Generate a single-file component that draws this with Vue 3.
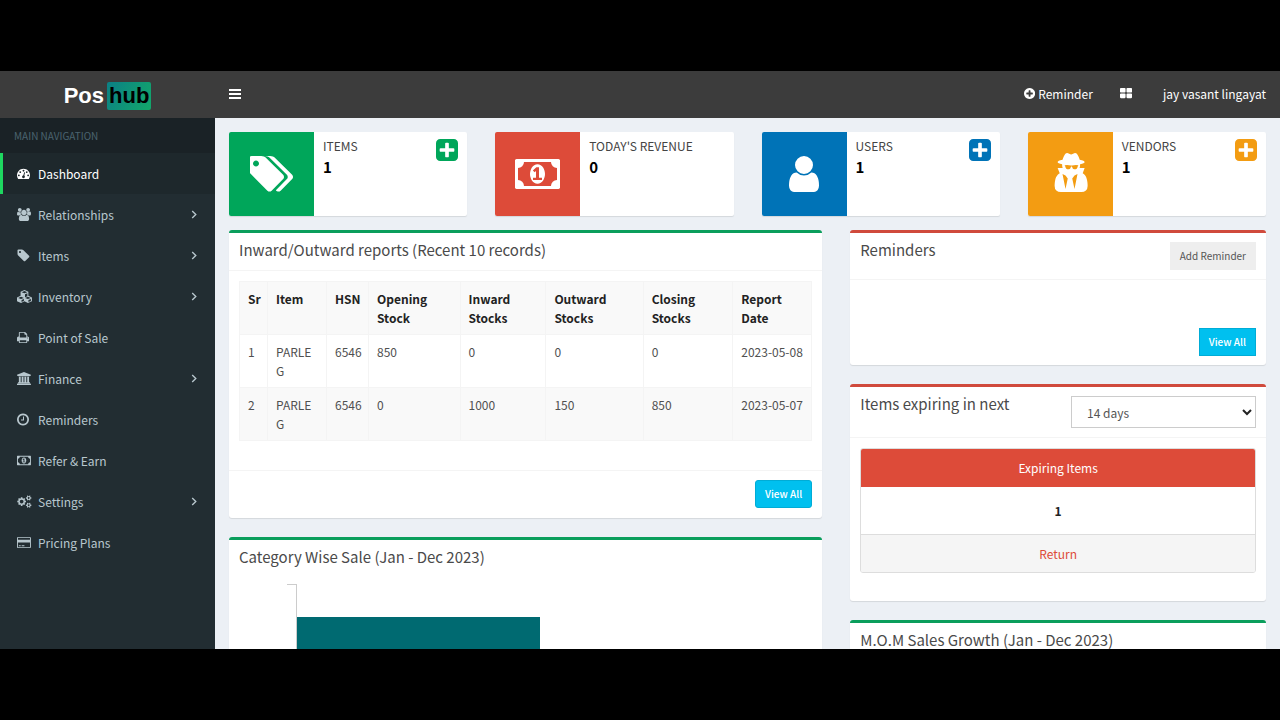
<template>
  <div class="stage">
    <div class="app">
      <header class="topbar">
        <a class="logo" href="#"><span>Pos</span><span class="logo-hub">hub</span></a>
        <div class="topbar-main">
          <button class="icon-btn" type="button" aria-label="Toggle navigation">
            <svg class="bars" viewBox="0 0 12 10"><path d="M0 0h12v2H0zM0 4h12v2H0zM0 8h12v2H0z" /></svg>
          </button>
          <nav class="topbar-links">
            <a class="reminder-link" href="#">
              <svg class="icon" viewBox="128 0 1536 1792"><path :d="icons.plusCircle" /></svg>
              Reminder
            </a>
            <a href="#" aria-label="Modules">
              <svg class="icon" viewBox="64 0 1664 1792"><path :d="icons.thLarge" /></svg>
            </a>
            <a class="user-link" href="#">jay vasant lingayat</a>
          </nav>
        </div>
      </header>

      <div class="wrapper">
        <aside class="sidebar">
          <div class="section-label">MAIN NAVIGATION</div>
          <ul class="menu">
            <li v-for="item in menu" :key="item.label">
              <a href="#" class="menu-link" :class="{ active: item.active }">
                <span class="menu-icon">
                  <svg class="icon" :viewBox="item.box">
                    <path :d="icons[item.icon]" fill-rule="evenodd" />
                  </svg>
                </span>
                <span class="menu-text">{{ item.label }}</span>
                <svg v-if="item.children" class="angle" viewBox="0 0 6 10">
                  <path d="M1 1l4 4-4 4" />
                </svg>
              </a>
            </li>
          </ul>
        </aside>

        <main class="content">
          <section class="stats">
            <div v-for="stat in stats" :key="stat.label" class="info-box" :class="stat.color">
              <div class="info-icon">
                <svg :viewBox="stat.box"><path :d="icons[stat.icon]" /></svg>
              </div>
              <div class="info-body">
                <span class="info-label">{{ stat.label }}</span>
                <strong class="info-value">{{ stat.value }}</strong>
              </div>
              <button v-if="stat.canAdd" class="info-add" type="button" :aria-label="'Add ' + stat.label">
                <svg viewBox="128 128 1536 1536"><path :d="icons.plusSquare" /></svg>
              </button>
            </div>
          </section>

          <section class="columns">
            <div class="col-left">
              <div class="box green">
                <div class="box-header">
                  <h3>Inward/Outward reports (Recent 10 records)</h3>
                </div>
                <div class="box-body">
                  <table class="report">
                    <thead>
                      <tr>
                        <th v-for="col in columns" :key="col.title" :class="col.cls">{{ col.title }}</th>
                      </tr>
                    </thead>
                    <tbody>
                      <tr v-for="row in rows" :key="row[0]">
                        <td v-for="(cell, i) in row" :key="i">{{ cell }}</td>
                      </tr>
                    </tbody>
                  </table>
                </div>
                <div class="box-footer">
                  <button class="btn btn-info rounded" type="button">View All</button>
                </div>
              </div>

              <div class="box green">
                <div class="box-header plain">
                  <h3>Category Wise Sale (Jan - Dec 2023)</h3>
                </div>
                <div class="chart">
                  <div class="chart-tick"></div>
                  <div class="chart-plot">
                    <div class="chart-bar" :style="{ width: barWidth + '%' }"></div>
                  </div>
                </div>
              </div>
            </div>

            <div class="col-right">
              <div class="box red">
                <div class="box-header">
                  <h3>Reminders</h3>
                  <button class="btn btn-default" type="button">Add Reminder</button>
                </div>
                <div class="reminder-body">
                  <button class="btn btn-info" type="button">View All</button>
                </div>
              </div>

              <div class="box red">
                <div class="box-header">
                  <h3><label for="expiry-range">Items expiring in next</label></h3>
                  <div class="select-wrap">
                    <select id="expiry-range" v-model="range">
                      <option>7 days</option>
                      <option>14 days</option>
                      <option>30 days</option>
                    </select>
                    <svg class="caret" viewBox="0 0 10 7"><path d="M1 1l4 4 4-4" /></svg>
                  </div>
                </div>
                <div class="expiry-body">
                  <div class="panel">
                    <div class="panel-head">Expiring Items</div>
                    <div class="panel-body">1</div>
                    <div class="panel-foot"><a href="#">Return</a></div>
                  </div>
                </div>
              </div>

              <div class="box green">
                <div class="box-header plain">
                  <h3>M.O.M Sales Growth (Jan - Dec 2023)</h3>
                </div>
                <div class="chart"></div>
              </div>
            </div>
          </section>
        </main>
      </div>
    </div>
  </div>
</template>

<script setup>
import { ref } from 'vue'

const range = ref('14 days')
const barWidth = 47

const icons = {
  dashboard:
    'M384 1152q0-53-37.5-90.5t-90.5-37.5-90.5 37.5-37.5 90.5 37.5 90.5 90.5 37.5 90.5-37.5 37.5-90.5zm192-448q0-53-37.5-90.5t-90.5-37.5-90.5 37.5-37.5 90.5 37.5 90.5 90.5 37.5 90.5-37.5 37.5-90.5zm428 481l101-382q6-26-7.5-48.5t-38.5-29.5-48 6.5-30 39.5l-101 382q-60 5-107 43.5t-63 98.5q-20 77 20 146t117 89 146-20 89-117q16-60-6-117t-72-91zm660-33q0-53-37.5-90.5t-90.5-37.5-90.5 37.5-37.5 90.5 37.5 90.5 90.5 37.5 90.5-37.5 37.5-90.5zm-640-640q0-53-37.5-90.5t-90.5-37.5-90.5 37.5-37.5 90.5 37.5 90.5 90.5 37.5 90.5-37.5 37.5-90.5zm448 192q0-53-37.5-90.5t-90.5-37.5-90.5 37.5-37.5 90.5 37.5 90.5 90.5 37.5 90.5-37.5 37.5-90.5zm320 448q0 261-141 483-19 29-54 29h-1402q-35 0-54-29-141-221-141-483 0-182 71-348t191-286 286-191 348-71 348 71 286 191 191 286 71 348z',
  users:
    'M529 896q-162 5-265 128h-134q-82 0-138-40.5t-56-118.5q0-353 124-353 6 0 43.5 21t97.5 42.5 119 21.5q67 0 133-23-5 37-5 66 0 159 93 302zm1071 637q0 120-73 189.5t-194 69.5h-874q-121 0-194-69.5t-73-189.5q0-53 3.5-103.5t14-109 26.5-108.5 43-97.5 62-81 85.5-53.5 111.5-20q10 0 43 21.5t73 48 107 48 135 21.5 135-21.5 107-48 73-48 43-21.5q61 0 111.5 20t85.5 53.5 62 81 43 97.5 26.5 108.5 14 109 3.5 103.5zm-1024-1277q0 106-75 181t-181 75-181-75-75-181 75-181 181-75 181 75 75 181zm704 384q0 159-112.5 271.5t-271.5 112.5-271.5-112.5-112.5-271.5 112.5-271.5 271.5-112.5 271.5 112.5 112.5 271.5zm576 225q0 78-56 118.5t-138 40.5h-134q-103-123-265-128 93-143 93-302 0-29-5-66 66 23 133 23 59 0 119-21.5t97.5-42.5 43.5-21q124 0 124 353zm-128-609q0 106-75 181t-181 75-181-75-75-181 75-181 181-75 181 75 75 181z',
  tag: 'M576 448q0-53-37.5-90.5t-90.5-37.5-90.5 37.5-37.5 90.5 37.5 90.5 90.5 37.5 90.5-37.5 37.5-90.5zm1067 576q0 53-37 90l-491 492q-39 37-91 37-53 0-90-37l-715-716q-38-37-64.5-101t-26.5-117v-416q0-52 38-90t90-38h416q53 0 117 26.5t102 64.5l715 714q37 39 37 91z',
  tags: 'M384 448q0-53-37.5-90.5t-90.5-37.5-90.5 37.5-37.5 90.5 37.5 90.5 90.5 37.5 90.5-37.5 37.5-90.5zm1067 576q0 53-37 90l-491 492q-39 37-91 37-53 0-90-37l-715-716q-38-37-64.5-101t-26.5-117v-416q0-52 38-90t90-38h416q53 0 117 26.5t102 64.5l715 714q37 39 37 91zm384 0q0 53-37 90l-491 492q-39 37-91 37-36 0-59-14t-53-45l470-470q37-37 37-90 0-52-37-91l-715-714q-38-38-102-64.5t-117-26.5h224q53 0 117 26.5t102 64.5l715 714q37 39 37 91z',
  cubes:
    'M1120 60l520 220v560l480 210v520l-540 230-460-220-460 220-540-230v-520l480-210v-560zM1120 190l-380 160 380 160 380-160zM1190 640v380l320-140v-380zM660 960l-380 160 380 160 380-160zM730 1410v250l320-150v-240zM1580 960l-380 160 380 160 380-160zM1650 1410v250l330-140v-250z',
  print:
    'M448 1536h896v-256h-896v256zm0-640h896v-384h-160q-40 0-68-28t-28-68v-160h-640v640zm1152 64q0-26-19-45t-45-19-45 19-19 45 19 45 45 19 45-19 19-45zm128 0v416q0 13-9.5 22.5t-22.5 9.5h-224v160q0 40-28 68t-68 28h-960q-40 0-68-28t-28-68v-160h-224q-13 0-22.5-9.5t-9.5-22.5v-416q0-79 56.5-135.5t135.5-56.5h64v-544q0-40 28-68t68-28h672q40 0 88 20t76 48l152 152q28 28 48 76t20 88v256h64q79 0 135.5 56.5t56.5 135.5z',
  bank: 'M960 0l960 384v128h-128q0 26-20.5 45t-48.5 19h-1526q-28 0-48.5-19t-20.5-45h-128v-128zm-704 640h256v768h128v-768h256v768h128v-768h256v768h128v-768h256v768h59q28 0 48.5 19t20.5 45v64h-1664v-64q0-26 20.5-45t48.5-19h59v-768zm1595 960q28 0 48.5 19t20.5 45v128h-1920v-128q0-26 20.5-45t48.5-19h1782z',
  clock:
    'M1024 544v448q0 14-9 23t-23 9h-320q-14 0-23-9t-9-23v-64q0-14 9-23t23-9h224v-352q0-14 9-23t23-9h64q14 0 23 9t9 23zm416 352q0-148-73-273t-198-198-273-73-273 73-198 198-73 273 73 273 198 198 273 73 273-73 198-198 73-273zm224 0q0 209-103 385.5t-279.5 279.5-385.5 103-385.5-103-279.5-279.5-103-385.5 103-385.5 279.5-279.5 385.5-103 385.5 103 279.5 279.5 103 385.5z',
  money:
    'M768 1152h384v-96h-128v-448h-114l-148 137 77 80q42-37 55-57h2v288h-128v96zm512-256q0 70-21 142t-59.5 134-101.5 101-138 39-138-39-101.5-101-59.5-134-21-142 21-142 59.5-134 101.5-101 138-39 138 39 101.5 101 59.5 134 21 142zm512 256v-512q-106 0-181-75t-75-181h-1152q0 106-75 181t-181 75v512q106 0 181 75t75 181h1152q0-106 75-181t181-75zm128-832v1152q0 26-19 45t-45 19h-1792q-26 0-45-19t-19-45v-1152q0-26 19-45t45-19h1792q26 0 45 19t19 45z',
  cogs: 'M540 300h200l30 160 90 40 130-90 140 140-90 130 40 90 160 30v200l-160 30-40 90 90 130-140 140-130-90-90 40-30 160H540l-30-160-90-40-130 90-140-140 90-130-40-90-160-30V800l160-30 40-90-90-130 140-140 130 90 90-40zM640 640a260 260 0 1 0 1 0zM1480 60l90 100h80l90-100 110 60-30 130 40 70 130 30v120l-130 30-40 70 30 130-110 60-90-100h-80l-90 100-110-60 30-130-40-70-130-30V350l130-30 40-70-30-130zM1610 290a120 120 0 1 0 1 0zM1480 1060l90 100h80l90-100 110 60-30 130 40 70 130 30v120l-130 30-40 70 30 130-110 60-90-100h-80l-90 100-110-60 30-130-40-70-130-30v-120l130-30 40-70-30-130zM1610 1290a120 120 0 1 0 1 0z',
  card: 'M1760 128q66 0 113 47t47 113v1216q0 66-47 113t-113 47h-1600q-66 0-113-47t-47-113v-1216q0-66 47-113t113-47h1600zm-1600 128q-13 0-22.5 9.5t-9.5 22.5v224h1664v-224q0-13-9.5-22.5t-22.5-9.5h-1600zm1600 1280q13 0 22.5-9.5t9.5-22.5v-608h-1664v608q0 13 9.5 22.5t22.5 9.5h1600zm-1504-128v-128h256v128h-256zm384 0v-128h384v128h-384z',
  user: 'M1536 1399q0 109-62.5 187t-150.5 78h-854q-88 0-150.5-78t-62.5-187q0-85 8.5-160.5t31.5-152 58.5-131 94-89 134.5-34.5q131 128 313 128t313-128q76 0 134.5 34.5t94 89 58.5 131 31.5 152 8.5 160.5zm-256-887q0 159-112.5 271.5t-271.5 112.5-271.5-112.5-112.5-271.5 112.5-271.5 271.5-112.5 271.5 112.5 112.5 271.5z',
  secret:
    'M576 1536l96-448-96-128-128-64zm384 0l128-640-128 64-96 128zm160-1010q-2-4-4-6-10-8-96-8-70 0-167 19-7 2-21 2t-21-2q-97-19-167-19-86 0-96 8-2 2-4 6 2 18 4 27 2 3 7.5 6.5t7.5 10.5q2 4 7.5 20.5t7 20.5 7.5 17 8.5 17 9 14 12 13.5 14 9.5 17.5 8 20.5 4 24.5 2q36 0 59-12.5t32.5-30 14.5-34.5 11.5-29.5 17.5-12.5h12q11 0 17.5 12.5t11.5 29.5 14.5 34.5 32.5 30 59 12.5q13 0 24.5-2t20.5-4 17.5-8 14-9.5 12-13.5 9-14 8.5-17 7.5-17 7-20.5 7.5-20.5q2-7 7.5-10.5t7.5-6.5q2-9 4-27zm400 879q0 121-73 190t-194 69h-874q-121 0-194-69t-73-190q0-61 4.5-118t19-125.5 37.5-123.5 63.5-103.5 93.5-74.5l-90-220h214q-22-64-22-128 0-12 2-32-194-40-194-96 0-57 210-99 17-62 51.5-134t70.5-114q32-37 76-37 30 0 84 31t84 31 84-31 84-31q44 0 76 37 36 42 70.5 114t51.5 134q210 42 210 99 0 56-194 96 7 81-20 160h214l-82 225q63 33 107.5 96.5t65.5 143.5 29 151.5 8 148.5z',
  thLarge:
    'M832 1024v384q0 52-38 90t-90 38h-512q-52 0-90-38t-38-90v-384q0-52 38-90t90-38h512q52 0 90 38t38 90zm0-768v384q0 52-38 90t-90 38h-512q-52 0-90-38t-38-90v-384q0-52 38-90t90-38h512q52 0 90 38t38 90zm896 768v384q0 52-38 90t-90 38h-512q-52 0-90-38t-38-90v-384q0-52 38-90t90-38h512q52 0 90 38t38 90zm0-768v384q0 52-38 90t-90 38h-512q-52 0-90-38t-38-90v-384q0-52 38-90t90-38h512q52 0 90 38t38 90z',
  plusCircle:
    'M1344 960v-128q0-26-19-45t-45-19h-256v-256q0-26-19-45t-45-19h-128q-26 0-45 19t-19 45v256h-256q-26 0-45 19t-19 45v128q0 26 19 45t45 19h256v256q0 26 19 45t45 19h128q26 0 45-19t19-45v-256h256q26 0 45-19t19-45zm320-64q0 209-103 385.5t-279.5 279.5-385.5 103-385.5-103-279.5-279.5-103-385.5 103-385.5 279.5-279.5 385.5-103 385.5 103 279.5 279.5 103 385.5z',
  plusSquare:
    'M1408 960v-128q0-26-19-45t-45-19h-320v-320q0-26-19-45t-45-19h-128q-26 0-45 19t-19 45v320h-320q-26 0-45 19t-19 45v128q0 26 19 45t45 19h320v320q0 26 19 45t45 19h128q26 0 45-19t19-45v-320h320q26 0 45-19t19-45zm256-544v960q0 119-84.5 203.5t-203.5 84.5h-960q-119 0-203.5-84.5t-84.5-203.5v-960q0-119 84.5-203.5t203.5-84.5h960q119 0 203.5 84.5t84.5 203.5z',
}

const menu = [
  { label: 'Dashboard', icon: 'dashboard', box: '0 0 1792 1792', active: true },
  { label: 'Relationships', icon: 'users', box: '-64 0 1920 1792', children: true },
  { label: 'Items', icon: 'tag', box: '64 64 1600 1664', children: true },
  { label: 'Inventory', icon: 'cubes', box: '120 60 2000 1740', children: true },
  { label: 'Point of Sale', icon: 'print', box: '64 0 1664 1792' },
  { label: 'Finance', icon: 'bank', box: '0 0 1920 1792', children: true },
  { label: 'Reminders', icon: 'clock', box: '128 64 1536 1664' },
  { label: 'Refer & Earn', icon: 'money', box: '0 0 1920 1792' },
  { label: 'Settings', icon: 'cogs', box: '0 0 2000 1792', children: true },
  { label: 'Pricing Plans', icon: 'card', box: '0 0 1920 1792' },
]

const stats = [
  { label: 'ITEMS', value: 1, icon: 'tags', box: '0 0 1856 1792', color: 'green', canAdd: true },
  { label: "TODAY'S REVENUE", value: 0, icon: 'money', box: '0 0 1920 1792', color: 'red' },
  { label: 'USERS', value: 1, icon: 'user', box: '0 0 1792 1792', color: 'blue', canAdd: true },
  { label: 'VENDORS', value: 1, icon: 'secret', box: '0 0 1536 1792', color: 'orange', canAdd: true },
]

const columns = [
  { title: 'Sr', cls: 'w-sr' },
  { title: 'Item', cls: 'w-item' },
  { title: 'HSN', cls: 'w-hsn' },
  { title: 'Opening Stock', cls: 'w-open' },
  { title: 'Inward Stocks', cls: 'w-in' },
  { title: 'Outward Stocks', cls: 'w-out' },
  { title: 'Closing Stocks', cls: 'w-close' },
  { title: 'Report Date', cls: 'w-date' },
]

const rows = [
  ['1', 'PARLE G', '6546', '850', '0', '0', '0', '2023-05-08'],
  ['2', 'PARLE G', '6546', '0', '1000', '150', '850', '2023-05-07'],
]
</script>

<style>
body {
  background: #000;
}
</style>

<style scoped>
* {
  box-sizing: border-box;
}

.stage {
  height: 100vh;
  padding: 71px 0;
  background: #000;
}

.app {
  display: flex;
  flex-direction: column;
  height: 100%;
  overflow: hidden;
  font-family: 'Noto Sans CJK SC', 'Noto Sans', sans-serif;
  font-size: 12px;
  line-height: 19px;
  color: #444;
  background: #ecf0f5;
}

a {
  color: inherit;
  text-decoration: none;
}

button,
select {
  font-family: inherit;
  font-size: inherit;
  line-height: inherit;
  cursor: pointer;
}

.icon {
  display: block;
  height: 13px;
  fill: currentColor;
}

/* top bar */
.topbar {
  display: flex;
  flex: none;
  height: 47px;
  color: #fff;
  background: #3c3c3c;
}

.logo {
  display: flex;
  flex: none;
  align-items: center;
  justify-content: center;
  gap: 3px;
  width: 215px;
  padding-top: 2px;
  font-family: 'Liberation Sans', Arial, sans-serif;
  font-size: 22px;
  font-weight: bold;
  line-height: 28px;
}

.logo-hub {
  padding: 0 2px;
  border-radius: 2px;
  color: #000;
  background: linear-gradient(120deg, #0b7f85, #13a86a);
}

.topbar-main {
  display: flex;
  flex: 1;
  align-items: center;
  justify-content: space-between;
  padding: 0 14px 2px;
}

.icon-btn {
  padding: 0;
  border: none;
  color: #fff;
  background: none;
}

.bars {
  display: block;
  width: 12px;
  height: 10px;
  fill: currentColor;
}

.topbar-links {
  display: flex;
  align-items: center;
  gap: 27px;
}

.reminder-link {
  display: flex;
  align-items: center;
  gap: 3px;
}

.user-link {
  padding-left: 4px;
}

.wrapper {
  display: flex;
  flex: 1;
  min-height: 0;
}

/* sidebar */
.sidebar {
  flex: none;
  width: 215px;
  color: #b8c7ce;
  background: #222d32;
}

.section-label {
  padding: 8px 14px;
  font-size: 10px;
  color: #4b646f;
  background: #1a2226;
}

.menu {
  margin: 0;
  padding: 0;
  list-style: none;
}

.menu-link {
  display: flex;
  align-items: center;
  padding: 11px 18px 11px 14px;
  border-left: 3px solid transparent;
}

.menu-link.active {
  border-left-color: #1ed760;
  color: #fff;
  background: #1e282c;
}

.menu-icon {
  flex: none;
  width: 21px;
}

.menu-text {
  flex: 1;
}

.angle {
  width: 6px;
  height: 9px;
  fill: none;
  stroke: currentColor;
  stroke-width: 1.5;
}

/* content */
.content {
  flex: 1;
  min-width: 0;
  padding: 14px;
}

.stats {
  display: grid;
  grid-template-columns: repeat(4, 1fr);
  gap: 28px;
  margin-bottom: 14px;
}

.info-box {
  display: flex;
  min-height: 84px;
  border-radius: 2px;
  background: #fff;
  box-shadow: 0 1px 1px rgba(0, 0, 0, 0.1);
}

.info-icon {
  display: flex;
  flex: none;
  align-items: center;
  justify-content: center;
  width: 85px;
  border-radius: 2px 0 0 2px;
}

.info-icon svg {
  height: 42px;
  fill: #fff;
}

.green .info-icon {
  background: #00a65a;
}

.red .info-icon {
  background: #dd4b39;
}

.blue .info-icon {
  background: #0073b7;
}

.orange .info-icon {
  background: #f39c12;
}

.info-body {
  display: flex;
  flex: 1;
  flex-direction: column;
  padding: 4px 9px;
}

.info-value {
  font-size: 15px;
  line-height: 24px;
  color: #000;
}

.info-add {
  align-self: flex-start;
  margin: 7px 9px 0 0;
  padding: 0;
  border: none;
  background: none;
}

.info-add svg {
  display: block;
  width: 22px;
  height: 22px;
}

.green .info-add {
  fill: #00a65a;
}

.blue .info-add {
  fill: #0073b7;
}

.orange .info-add {
  fill: #f39c12;
}

.columns {
  display: grid;
  grid-template-columns: repeat(12, 1fr);
  column-gap: 28px;
  align-items: start;
}

.col-left {
  grid-column: span 7;
}

.col-right {
  grid-column: span 5;
}

.box {
  margin-bottom: 19px;
  border-top: 3px solid #00a65a;
  border-radius: 3px;
  background: #fff;
  box-shadow: 0 1px 1px rgba(0, 0, 0, 0.1);
}

.box.red {
  border-top-color: #d04a3c;
}

.box.green {
  border-top-color: #0a9e5c;
}

.box-header {
  display: flex;
  align-items: flex-start;
  justify-content: space-between;
  padding: 9px 10px;
  border-bottom: 1px solid #f4f4f4;
}

.box-header.plain {
  border-bottom: none;
}

.box-header h3 {
  margin: 0 0 3px;
  font-size: 15px;
  font-weight: normal;
  line-height: 16px;
  color: #4a4a4a;
}

.box-body {
  padding: 10px 10px 29px;
}

.report {
  width: 100%;
  table-layout: fixed;
  border-collapse: collapse;
}

.report th,
.report td {
  padding: 7px 8px;
  border: 1px solid #f4f4f4;
  text-align: left;
  vertical-align: top;
}

.report td {
  color: #505050;
}

.report td:last-child {
  white-space: nowrap;
}

.report th {
  color: #222;
  background: #f9f9f9;
}

.report tbody tr:nth-child(even) {
  background: #f9f9f9;
}

.w-sr {
  width: 28px;
}

.w-item {
  width: 59px;
}

.w-hsn {
  width: 42px;
}

.w-open {
  width: 16%;
}

.w-in {
  width: 15%;
}

.w-out {
  width: 17%;
}

.w-date {
  width: 79px;
}

.box-footer {
  display: flex;
  justify-content: flex-end;
  padding: 9px 10px 10px;
  border-top: 1px solid #f4f4f4;
}

.btn {
  padding: 4px 9px;
  border: 1px solid transparent;
  font-size: 10px;
  line-height: 18px;
}

.btn-info {
  border-color: #00acd6;
  color: #fff;
  font-weight: 500;
  background: #00c0ef;
}

.btn-info.rounded {
  border-radius: 3px;
}

.btn-default {
  color: #555;
  background: #eee;
}

.reminder-body {
  display: flex;
  justify-content: flex-end;
  padding: 48px 10px 9px;
}

.select-wrap {
  position: relative;
  width: 185px;
}

.select-wrap select {
  display: block;
  width: 100%;
  height: 32px;
  padding: 0 15px;
  border: 1px solid #ccc;
  border-radius: 0;
  color: #555;
  background: #fff;
  appearance: none;
}

.caret {
  position: absolute;
  top: 13px;
  right: 4px;
  width: 10px;
  height: 7px;
  fill: none;
  stroke: #222;
  stroke-width: 2;
  pointer-events: none;
}

.expiry-body {
  padding: 10px 10px 28px;
}

.panel {
  overflow: hidden;
  border: 1px solid #ddd;
  border-radius: 3px;
  text-align: center;
}

.panel-head {
  padding: 9px 9px 10px;
  color: #fff;
  background: #dd4b39;
}

.panel-body {
  padding: 14px;
  font-weight: bold;
  color: #222;
}

.panel-foot {
  padding: 9px;
  border-top: 1px solid #ddd;
  color: #dd4b39;
  background: #f5f5f5;
}

.chart {
  display: flex;
  min-height: 200px;
  padding: 7px 9px 9px 58px;
}

.chart-tick {
  width: 9px;
  border-top: 1px solid #ccc;
}

.chart-plot {
  flex: 1;
  padding-top: 33px;
  border-left: 1px solid #ccc;
}

.chart-bar {
  height: 120px;
  background: #006a71;
}
</style>
